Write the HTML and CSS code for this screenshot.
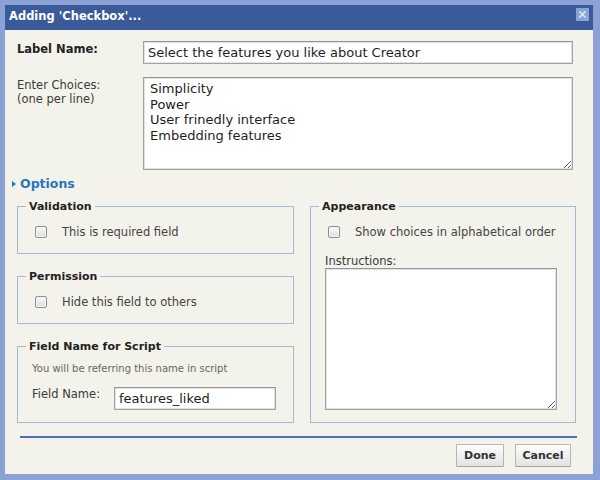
FILE: index.html
```html
<!DOCTYPE html>
<html lang="en">
<head>
<meta charset="utf-8">
<title>Adding 'Checkbox'...</title>
<link rel="stylesheet" href="styles.css">
</head>
<body>
<div class="dialog">
  <header class="titlebar">
    <span class="title">Adding 'Checkbox'...</span>
    <span class="close" title="Close">
      <svg width="13" height="13" viewBox="0 0 13 13">
        <rect x="0" y="0" width="13" height="13" fill="#8ea3d5"/>
        <path d="M4 4 L9 9 M9 4 L4 9" stroke="#dfe6f6" stroke-width="1.6" stroke-linecap="square"/>
      </svg>
    </span>
  </header>

  <div class="content">
    <div class="form-row">
      <label class="row-label strong" for="label-name">Label Name:</label>
      <input id="label-name" class="text-input wide" type="text" value="Select the features you like about Creator">
    </div>

    <div class="form-row choices-row">
      <label class="row-label" for="choices">Enter Choices:<br>(one per line)</label>
      <textarea id="choices" class="text-area choices">Simplicity
Power
User frinedly interface
Embedding features</textarea>
    </div>

    <div class="options-toggle"><span class="caret"></span>Options</div>

    <div class="option-columns">
      <div class="option-stack">
        <fieldset class="group">
          <legend>Validation</legend>
          <div class="group-body">
            <label class="check"><input type="checkbox"><span>This is required field</span></label>
          </div>
        </fieldset>

        <fieldset class="group">
          <legend>Permission</legend>
          <div class="group-body">
            <label class="check"><input type="checkbox"><span>Hide this field to others</span></label>
          </div>
        </fieldset>

        <fieldset class="group">
          <legend>Field Name for Script</legend>
          <div class="group-body script-body">
            <div class="note">You will be referring this name in script</div>
            <div class="field-row">
              <label class="field-label" for="field-name">Field Name:</label>
              <input id="field-name" class="text-input field-input" type="text" value="features_liked">
            </div>
          </div>
        </fieldset>
      </div>

      <fieldset class="group appearance">
        <legend>Appearance</legend>
        <div class="group-body appearance-body">
          <label class="check indent"><input type="checkbox"><span>Show choices in alphabetical order</span></label>
          <label class="instr-label" for="instructions">Instructions:</label>
          <textarea id="instructions" class="text-area instructions"></textarea>
        </div>
      </fieldset>
    </div>

    <div class="rule"></div>

    <div class="actions">
      <button class="btn done" type="button">Done</button>
      <button class="btn cancel" type="button">Cancel</button>
    </div>
  </div>
</div>
</body>
</html>
```

FILE: styles.css
```css
* {
  box-sizing: border-box;
}

html,
body {
  margin: 0;
}

body {
  width: 600px;
  height: 480px;
  padding: 5px 7px 6px 5px;
  background: #8ca2d7;
  font-family: "DejaVu Sans", Verdana, sans-serif;
  overflow: hidden;
}

.dialog {
  width: 588px;
  height: 469px;
  background: #f3f3eb;
  display: flex;
  flex-direction: column;
}

/* title bar */
.titlebar {
  height: 25px;
  flex: none;
  background: #3b5a9a;
  display: flex;
  justify-content: space-between;
  align-items: flex-start;
  padding: 4px 4px 0 4px;
}

.title {
  color: #ffffff;
  font-weight: bold;
  font-size: 11.5px;
  line-height: 14px;
}

.close {
  width: 13px;
  height: 13px;
  margin-top: -1px;
  display: block;
}

.close svg {
  display: block;
}

/* form body */
.content {
  padding: 0 17px 0 12px;
}

.form-row {
  display: flex;
  margin-top: 11px;
  margin-right: 3px;
}

.choices-row {
  margin-top: 13px;
}

.row-label {
  width: 126px;
  flex: none;
  padding-top: 1px;
  font-size: 11.5px;
  line-height: 14px;
  color: #3a3a3a;
}

.strong {
  font-weight: bold;
  color: #222222;
}

.text-input {
  height: 23px;
  margin: 0;
  border: 1px solid #a2a2a2;
  border-top-color: #969696;
  box-shadow: inset 0 0 0 1px #e2e2e2;
  background: #ffffff;
  padding: 0 4px;
  font-family: "DejaVu Sans", Verdana, sans-serif;
  font-size: 13px;
  color: #1e1e1e;
  outline: none;
}

.wide {
  flex: 1;
  min-width: 0;
}

.text-area {
  display: block;
  margin: 0;
  border: 1px solid #a2a2a2;
  border-top-color: #969696;
  box-shadow: inset 0 0 0 1px #e2e2e2;
  background: #ffffff;
  font-family: "DejaVu Sans", Verdana, sans-serif;
  font-size: 13px;
  line-height: 15.5px;
  color: #1e1e1e;
  outline: none;
}

.choices {
  flex: 1;
  min-width: 0;
  height: 93px;
  padding: 3px 6px;
}

/* options toggle */
.options-toggle {
  display: flex;
  align-items: center;
  margin-top: 6px;
  height: 16px;
  font-weight: bold;
  font-size: 12.5px;
  line-height: 16px;
  color: #2477bd;
}

.caret {
  width: 0;
  height: 0;
  margin-left: -5px;
  margin-right: 4px;
  border-left: 4px solid #2477bd;
  border-top: 3.5px solid transparent;
  border-bottom: 3.5px solid transparent;
}

/* option groups */
.option-columns {
  display: grid;
  grid-template-columns: 277px 266px;
  column-gap: 16px;
  margin-top: 7px;
}

.option-stack {
  display: flex;
  flex-direction: column;
  gap: 15px;
}

.group {
  margin: 0;
  padding: 0;
  min-width: 0;
  border: 1px solid #a6b9d4;
}

.group legend {
  margin-left: 8px;
  padding: 2px 3px 0;
  font-weight: bold;
  font-size: 11px;
  line-height: 12px;
  color: #222222;
}

.group-body {
  padding: 11px 16px 13px 17px;
}

.check {
  display: flex;
  align-items: center;
  gap: 15px;
  font-size: 11.5px;
  line-height: 16px;
  color: #444444;
}

.check input {
  appearance: none;
  -webkit-appearance: none;
  width: 12px;
  height: 12px;
  margin: 0;
  flex: none;
  border: 1px solid #8f8f8f;
  border-radius: 2px;
  background: linear-gradient(#fbfbfb, #dcdcdc);
  box-shadow: inset 0 0 0 1px #f4f4f4;
}

.script-body {
  padding: 9px 16px 12px 14px;
}

.note {
  font-size: 10px;
  line-height: 14px;
  color: #666666;
}

.field-row {
  display: flex;
  align-items: flex-start;
  margin-top: 11px;
}

.field-label {
  width: 82px;
  flex: none;
  font-size: 11.5px;
  line-height: 14px;
  color: #3a3a3a;
}

.field-input {
  width: 162px;
}

.appearance-body {
  padding: 11px 17px 12px 14px;
}

.indent {
  margin-left: 3px;
}

.instr-label {
  display: block;
  margin-top: 14px;
  font-size: 11.5px;
  line-height: 14px;
  color: #3a3a3a;
}

.instructions {
  width: 232px;
  height: 142px;
  padding: 3px 5px;
}

/* footer */
.rule {
  height: 2px;
  margin: 13px -1px 0 3px;
  background: #4b70bb;
}

.actions {
  display: flex;
  justify-content: flex-end;
  gap: 11px;
  margin-top: 6px;
  margin-right: 5px;
}

.btn {
  height: 23px;
  margin: 0;
  padding: 0;
  border: 1px solid #b6b6b6;
  border-bottom-color: #a4a4a4;
  border-radius: 1px;
  background: linear-gradient(#fdfdfd, #e3e3e3);
  font-family: "DejaVu Sans", Verdana, sans-serif;
  font-weight: bold;
  font-size: 11px;
  color: #333333;
}

.done {
  width: 48px;
}

.cancel {
  width: 56px;
}
```
